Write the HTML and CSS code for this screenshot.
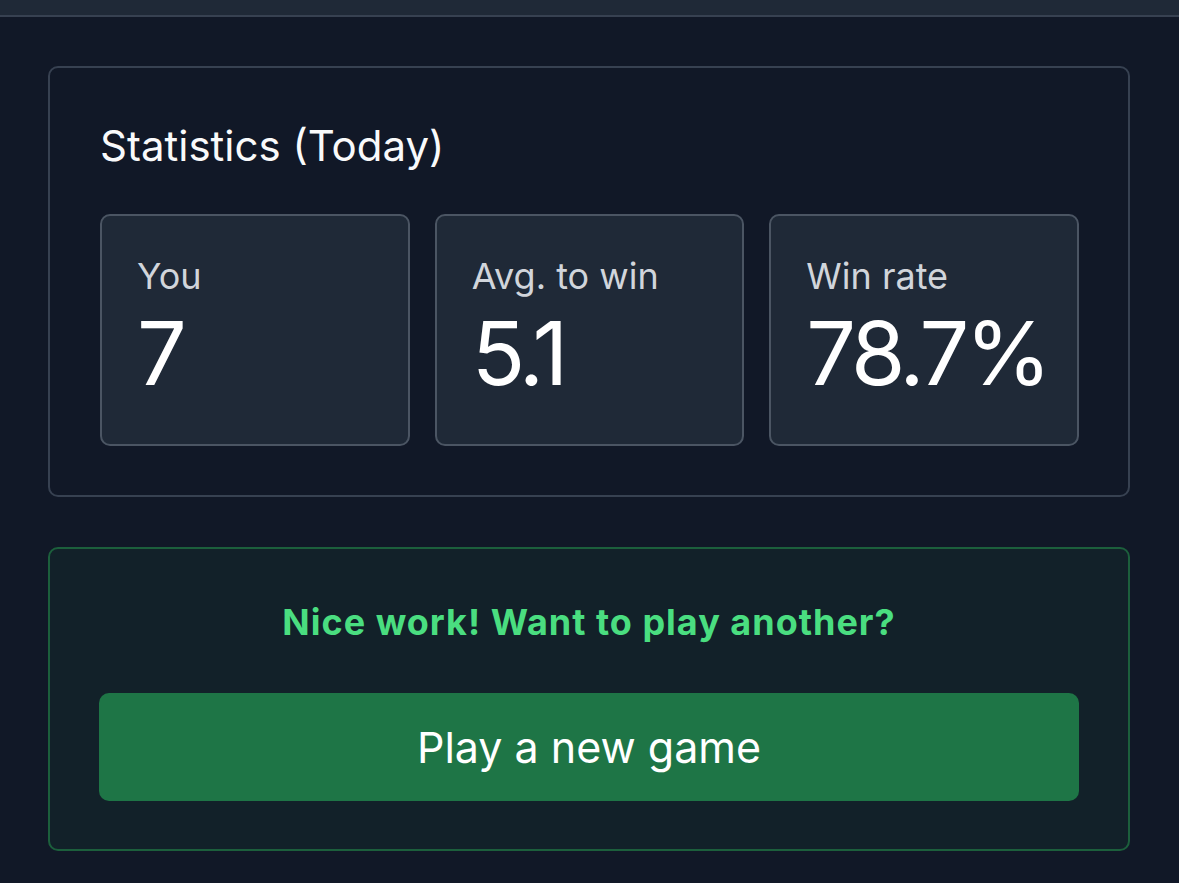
FILE: index.html
```html
<!DOCTYPE html>
<html lang="en">
<head>
<meta charset="utf-8">
<title>Statistics</title>
<link rel="stylesheet" href="styles.css">
</head>
<body>
<header class="topbar"></header>
<main class="content">
  <section class="stats-card">
    <h2 class="stats-title">Statistics (Today)</h2>
    <div class="stats-grid">
      <div class="stat">
        <div class="stat-label">You</div>
        <div class="stat-value">7</div>
      </div>
      <div class="stat">
        <div class="stat-label">Avg. to win</div>
        <div class="stat-value">5.1</div>
      </div>
      <div class="stat">
        <div class="stat-label">Win rate</div>
        <div class="stat-value">78.7%</div>
      </div>
    </div>
  </section>
  <section class="win-card">
    <p class="win-text">Nice work! Want to play another?</p>
    <button class="play-btn" type="button">Play a new game</button>
  </section>
</main>
</body>
</html>
```

FILE: styles.css
```css
* { box-sizing: border-box; }
html, body { margin: 0; padding: 0; }
body {
  background: #111827;
  font-family: "Inter", "Noto Sans", "Liberation Sans", sans-serif;
  color: #ffffff;
  width: 1179px;
  height: 883px;
  overflow: hidden;
}
.topbar {
  height: 17px;
  background: #1f2937;
  border-bottom: 2px solid #374151;
}
.content {
  padding: 49px 49px 0 48px;
  display: flex;
  flex-direction: column;
  gap: 50px;
}
.stats-card {
  border: 2px solid #374151;
  border-radius: 10px;
  padding: 50px 49px 49px 50px;
}
.stats-title {
  margin: 0 0 40px 0;
  font-size: 42px;
  font-weight: 400;
  line-height: 56px;
  color: #f9fafb;
}
.stats-grid {
  display: grid;
  grid-template-columns: repeat(3, minmax(0, 1fr));
  gap: 25px;
}
.stat {
  height: 232px;
  background: #1f2937;
  border: 2px solid #4b5563;
  border-radius: 10px;
  padding: 37px 35px 0 35px;
}
.stat-label {
  font-size: 36px;
  line-height: 46px;
  color: #d1d5db;
}
.stat-value {
  font-size: 88px;
  line-height: 108px;
  font-weight: 400;
  color: #ffffff;
  letter-spacing: -4px;
}
.win-card {
  border: 2px solid #1c5f3c;
  border-radius: 10px;
  background: #122129;
  padding: 50px 49px 48px 49px;
  display: flex;
  flex-direction: column;
  align-items: stretch;
}
.win-text {
  margin: 0 0 48px 0;
  text-align: center;
  color: #4ade80;
  font-size: 36px;
  font-weight: 700;
  line-height: 46px;
  letter-spacing: 1px;
}
.play-btn {
  height: 108px;
  border: none;
  border-radius: 10px;
  background: #1e7546;
  color: #ffffff;
  font-family: inherit;
  font-size: 43px;
  font-weight: 400;
}
```
